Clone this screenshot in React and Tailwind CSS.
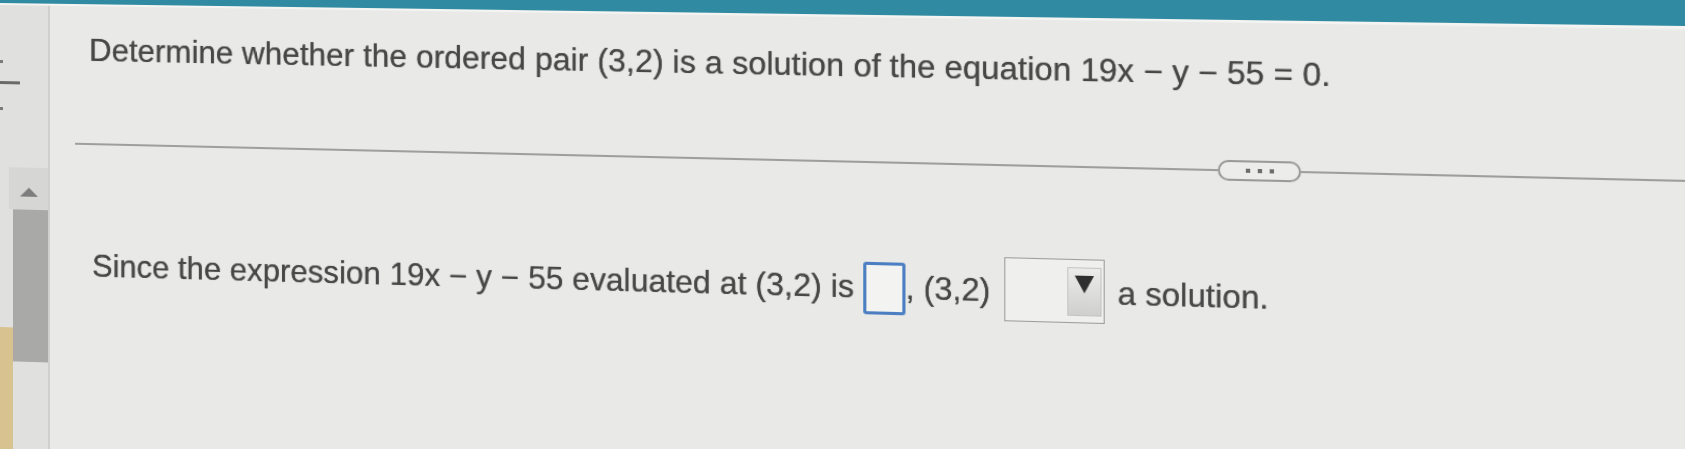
import React from "react";

function Dropdown() {
  return (
    <span className="ml-[4px] inline-block h-[62px] w-[94px] overflow-hidden border border-[#9c9c9a] bg-[#efefed] align-[-19px]">
      <span className="flex h-full w-full items-start justify-end pr-[2px] pt-[7px]">
        <span className="flex h-[47px] w-[32px] justify-center border border-[#c4c4c2] bg-gradient-to-b from-[#ececea] to-[#cfcfcd] pt-[5px]">
          <svg width="20" height="20" viewBox="0 0 20 20">
            <polygon points="1,2 19,2 10,19" fill="#2f2f2f" />
          </svg>
        </span>
      </span>
    </span>
  );
}

export default function App() {
  const text =
    "leading-[36px] text-[#474747] whitespace-nowrap [text-shadow:0_0_0.7px_#5a5a5a]";
  return (
    <div
      className="relative h-[449px] w-[1685px] overflow-hidden bg-gradient-to-r from-[#e6e6e4] to-[#ecece9]"
      style={{ fontFamily: '"Liberation Sans", Arial, sans-serif' }}
    >
      {/* photographed page, seen slightly in perspective */}
      <div className="flex h-[470px] w-[1700px] origin-top-left [transform:perspective(2000px)_rotateY(-3.8deg)_skewY(1.05deg)]">
        {/* left sidebar */}
        <aside className="flex w-[50px] shrink-0 flex-col border-r-2 border-[#cfcfcd] bg-[#e0e0de]">
          <div className="mt-[60px] h-[3px] w-[3px] bg-[#7a7a7a]" />
          <div className="mt-[18px] h-[3px] w-[20px] bg-[#6a6a6a]" />
          <div className="mt-[23px] h-[3px] w-[3px] bg-[#7a7a7a]" />
          <div className="ml-[9px] mt-[57px] flex h-[42px] items-start justify-center bg-[#d6d6d4] pt-[20px]">
            <svg width="18" height="9" viewBox="0 0 18 9">
              <polygon points="9,0 18,9 0,9" fill="#7d7d7d" />
            </svg>
          </div>
          <div className="flex flex-1">
            <div className="flex w-[13px] flex-col">
              <div className="mt-[118px] flex-1 bg-[#d8c290]" />
            </div>
            <div className="h-[152px] w-[35px] bg-[#a9a9a8]" />
          </div>
        </aside>

        {/* main content */}
        <main className="flex min-w-0 flex-1 flex-col bg-[#e9e9e7]">
          <div className={`mt-[31px] pl-[39px] text-[31px] ${text}`}>
            Determine whether the ordered pair (3,2) is a solution of the equation 19x − y − 55 = 0.
          </div>

          <div className="ml-[25px] mt-[65px] flex h-[20px] items-center">
            <div className="h-[2px] w-[1098px] bg-[#9e9e9c]" />
            <button className="flex h-[20px] w-[77px] shrink-0 items-center justify-center gap-[7px] rounded-full border-2 border-[#9a9a98] bg-[#ececea]">
              <span className="h-[4px] w-[4px] bg-[#6d6d6d]" />
              <span className="h-[4px] w-[4px] bg-[#6d6d6d]" />
              <span className="h-[4px] w-[4px] bg-[#6d6d6d]" />
            </button>
            <div className="h-[2px] flex-1 bg-[#9e9e9c]" />
          </div>

          <div className={`mt-[79px] pl-[42px] text-[30.7px] ${text}`}>
            Since the expression 19x − y − 55 evaluated at (3,2) is{" "}
            <span className="inline-block h-[51px] w-[40px] rounded-[3px] border-[3px] border-[#4c7fc2] bg-[#f3f3f1] align-[-16px]" />
            , (3,2) <Dropdown /> <span className="ml-[4px]">a solution.</span>
          </div>
        </main>
      </div>

      {/* teal header strip lying over the top edge */}
      <div className="absolute inset-x-0 top-0 h-[29px] bg-[#f4f4f2] [clip-path:polygon(0_0,100%_0,100%_29px,0_5px)]" />
      <div className="absolute inset-x-0 top-0 h-[26px] bg-[#2f8aa2] [clip-path:polygon(0_0,100%_0,100%_26px,0_3px)]" />
    </div>
  );
}
